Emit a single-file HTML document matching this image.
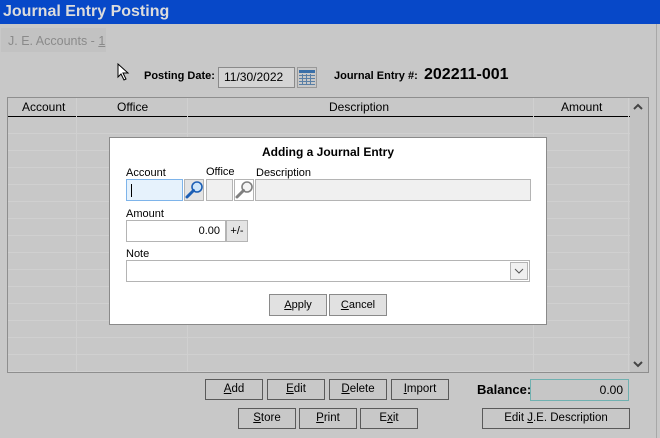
<!DOCTYPE html><html><head><style>
*{box-sizing:border-box;margin:0;padding:0}
body{width:660px;height:438px;background:#c8c8c8;font-family:"Liberation Sans",Arial,sans-serif;font-size:12px;color:#000;position:relative;overflow:hidden}
.a{position:absolute;white-space:nowrap}
.btn{position:absolute;border:1px solid #5a5a5a;background:#c8c8c8;text-align:center;font-size:11.5px;line-height:19px;height:21px}
.grid{background-image:repeating-linear-gradient(to bottom,transparent 0,transparent 16px,#d0d0d0 16px,#d0d0d0 17px)}
.vl{position:absolute;top:0;bottom:0;width:1px;background:#d0d0d0}
.dl{position:absolute;font-size:11px}
.in{position:absolute;border:1px solid #b4b4b4;background:#f0f0f0}
</style></head><body>
<div class="a" style="left:0;top:0;width:660px;height:24px;background:#0748c8;color:#dcdcdc;font-weight:bold;font-size:16px;line-height:24px;padding-left:3px">Journal Entry Posting</div>
<div class="a" style="left:1px;top:28px;width:105px;height:24px;background:#c2c2c2;color:#8a8a8a;font-size:12.5px;line-height:26px;padding-left:7px">J. E. Accounts - <u>1</u></div>
<div class="a" style="left:656px;top:24px;width:1px;height:414px;background:#a8a8a8"></div>
<svg class="a" style="left:117px;top:63px" width="14" height="18" viewBox="0 0 14 18"><path d="M1 1 L1 14 L4 11 L7 17 L9 16 L6 10 L11 10 Z" fill="#fff" stroke="#000" stroke-width="1"/></svg>
<div class="a" style="left:144px;top:70px;font-weight:bold;font-size:11px">Posting Date:</div>
<div class="a" style="left:218px;top:67px;width:77px;height:21px;border:1px solid #8a8a8a;background:#d4d4d4;font-size:12px;line-height:19px;padding-left:5px">11/30/2022</div>
<svg class="a" style="left:297px;top:67px" width="20" height="21"><rect x="0.5" y="0.5" width="19" height="20" fill="#c8c8c8" stroke="#999"/><rect x="2" y="3" width="16" height="3" fill="#3a6fa8"/><g fill="#5a7fa5"><rect x="2" y="8" width="16" height="1"/><rect x="2" y="11" width="16" height="1"/><rect x="2" y="14" width="16" height="1"/><rect x="2" y="17" width="16" height="1"/><rect x="5" y="7" width="1" height="11"/><rect x="9" y="7" width="1" height="11"/><rect x="13" y="7" width="1" height="11"/></g></svg>
<div class="a" style="left:334px;top:70px;font-weight:bold;font-size:11px">Journal Entry #:</div>
<div class="a" style="left:424px;top:66px;font-weight:bold;font-size:16px">202211-001</div>
<div class="a" style="left:7px;top:97px;width:642px;height:276px;border:1px solid #8e8e8e;background:#c8c8c8">
 <div class="a" style="left:0;top:0;width:622px;height:19px;border-bottom:1px solid #000"></div>
 <div class="a" style="left:14px;top:2px;font-size:12px">Account</div>
 <div class="a" style="left:109px;top:2px;font-size:12px">Office</div>
 <div class="a" style="left:321px;top:2px;font-size:12px">Description</div>
 <div class="a" style="left:553px;top:2px;font-size:12px">Amount</div>
 <div class="a grid" style="left:0;top:19px;width:622px;height:255px"></div>
 <div class="vl" style="left:68px"></div><div class="vl" style="left:179px"></div><div class="vl" style="left:525px"></div><div class="vl" style="left:620px"></div>
 <div class="a" style="left:622px;top:0;width:18px;height:274px;background:#c2c2c2"></div>
 <svg class="a" style="left:625px;top:5px" width="10" height="8"><path d="M1 6 L5 2 L9 6" fill="none" stroke="#444" stroke-width="2"/></svg>
 <svg class="a" style="left:625px;top:262px" width="10" height="8"><path d="M1 2 L5 6 L9 2" fill="none" stroke="#444" stroke-width="2"/></svg>
</div>
<div class="a" style="left:109px;top:137px;width:438px;height:188px;background:#fff;border:1px solid #8a8a8a">
 <div class="a" style="left:0;width:436px;top:7px;text-align:center;font-weight:bold;font-size:12px">Adding a Journal Entry</div>
 <div class="dl" style="left:16px;top:29px">Account</div>
 <div class="dl" style="left:96px;top:28px">Office</div>
 <div class="dl" style="left:146px;top:29px">Description</div>
 <div class="a" style="left:16px;top:41px;width:57px;height:22px;border:1px solid #7eb4ea;background:#e6f2fc"><div class="a" style="left:4px;top:4px;width:1px;height:13px;background:#000"></div></div>
 <div class="a" style="left:74px;top:41px;width:20px;height:22px;border:1px solid #b4b4b4;background:#e4e4e4"></div>
 <svg class="a" style="left:75px;top:42px" width="19" height="20"><circle cx="12" cy="7" r="5" fill="#cfe6fa" stroke="#1d5fb5" stroke-width="1.6"/><path d="M8.5 10.5 L2 17" stroke="#1d5fb5" stroke-width="3" stroke-linecap="round"/></svg>
 <div class="in" style="left:96px;top:41px;width:27px;height:22px"></div>
 <div class="a" style="left:124px;top:41px;width:20px;height:22px;border:1px solid #b4b4b4;background:#fff"></div>
 <svg class="a" style="left:125px;top:42px" width="19" height="20"><circle cx="12" cy="7" r="5" fill="#f4f4f4" stroke="#808080" stroke-width="1.6"/><path d="M8.5 10.5 L2 17" stroke="#808080" stroke-width="3" stroke-linecap="round"/></svg>
 <div class="in" style="left:145px;top:41px;width:276px;height:22px"></div>
 <div class="dl" style="left:16px;top:70px">Amount</div>
 <div class="a" style="left:16px;top:82px;width:100px;height:22px;border:1px solid #b4b4b4;background:#fff;text-align:right;padding-right:5px;line-height:20px;font-size:11px">0.00</div>
 <div class="a" style="left:116px;top:82px;width:22px;height:22px;border:1px solid #b4b4b4;background:#e4e4e4;text-align:center;line-height:20px;font-size:11px">+/-</div>
 <div class="dl" style="left:16px;top:110px">Note</div>
 <div class="a" style="left:16px;top:122px;width:404px;height:22px;border:1px solid #b4b4b4;background:#fff"></div>
 <div class="a" style="left:400px;top:124px;width:18px;height:18px;border:1px solid #b4b4b4;background:#f0f0f0"></div>
 <svg class="a" style="left:404px;top:130px" width="10" height="6"><path d="M1 1 L5 5 L9 1" fill="none" stroke="#555"/></svg>
 <div class="btn" style="left:159px;top:156px;width:58px;height:22px;background:#e1e1e1;border-color:#8a8a8a;line-height:20px;font-size:11px"><u>A</u>pply</div>
 <div class="btn" style="left:219px;top:156px;width:58px;height:22px;background:#e1e1e1;border-color:#8a8a8a;line-height:20px;font-size:11px"><u>C</u>ancel</div>
</div>
<div class="btn" style="left:205px;top:379px;width:58px"><u>A</u>dd</div>
<div class="btn" style="left:267px;top:379px;width:58px"><u>E</u>dit</div>
<div class="btn" style="left:329px;top:379px;width:58px"><u>D</u>elete</div>
<div class="btn" style="left:391px;top:379px;width:58px"><u>I</u>mport</div>
<div class="a" style="left:477px;top:382px;font-weight:bold;font-size:13px">Balance:</div>
<div class="a" style="left:530px;top:379px;width:99px;height:22px;border:1px solid #6fb0b0;background:#c6c6c6;text-align:right;padding-right:5px;line-height:20px;font-size:12px">0.00</div>
<div class="btn" style="left:238px;top:408px;width:58px"><u>S</u>tore</div>
<div class="btn" style="left:299px;top:408px;width:58px"><u>P</u>rint</div>
<div class="btn" style="left:360px;top:408px;width:58px">E<u>x</u>it</div>
<div class="btn" style="left:482px;top:408px;width:148px">Edit <u>J</u>.E. Description</div>
</body></html>
